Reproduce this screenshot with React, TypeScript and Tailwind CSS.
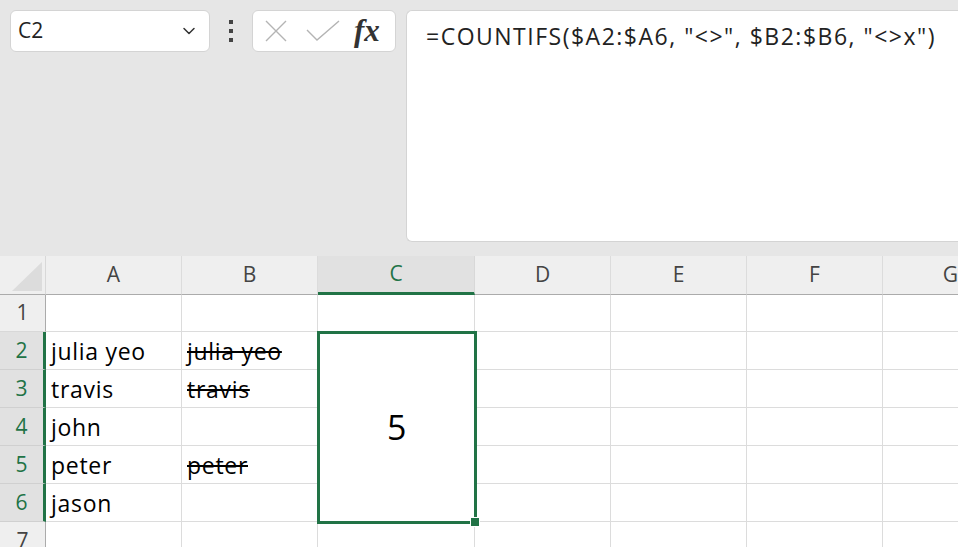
import { ChevronDown } from "lucide-react";

const cols = ["A", "B", "C", "D", "E", "F", "G"];

const rows: { a: string; b: string }[] = [
  { a: "", b: "" },
  { a: "julia yeo", b: "julia yeo" },
  { a: "travis", b: "travis" },
  { a: "john", b: "" },
  { a: "peter", b: "peter" },
  { a: "jason", b: "" },
  { a: "", b: "" },
];

const font = { fontFamily: "'Open Sans', 'Noto Sans', sans-serif" };

export default function App() {
  return (
    <div className="w-[958px] h-[547px] overflow-hidden bg-white" style={font}>
      {/* formula bar area */}
      <div className="h-[256px] bg-[#e6e6e6] flex items-start pt-[10px]">
        <div className="ml-[10px] w-[200px] h-[42px] bg-white rounded-md border border-[#d4d4d4] flex items-center justify-between pl-[7px] pr-[10px]">
          <span className="text-[21px] text-[#222]">C2</span>
          <ChevronDown className="w-5 h-5 text-[#333]" strokeWidth={1.8} />
        </div>
        <div className="w-[42px] h-[42px] flex flex-col items-center justify-center gap-[5px]">
          <div className="w-[4px] h-[4px] bg-[#444]" />
          <div className="w-[4px] h-[4px] bg-[#444]" />
          <div className="w-[4px] h-[4px] bg-[#444]" />
        </div>
        <div className="w-[144px] h-[42px] bg-white rounded-md border border-[#d4d4d4] flex items-center pl-[11px] gap-[18px]">
          <svg width="24" height="24" viewBox="0 0 24 24" className="text-[#b4b4b4]">
            <path d="M2 2 L22 22 M22 2 L2 22" stroke="currentColor" strokeWidth="1.4" fill="none" />
          </svg>
          <svg width="34" height="22" viewBox="0 0 34 22" className="text-[#b4b4b4]">
            <path d="M1 10 L11 20 L33 1" stroke="currentColor" strokeWidth="1.4" fill="none" />
          </svg>
          <span className="text-[31px] italic font-semibold text-[#333] leading-none -mt-[2px] -ml-[4px]" style={{ fontFamily: "'Liberation Serif', serif" }}>
            fx
          </span>
        </div>
        <div className="ml-[10px] flex-1 h-[232px] bg-white rounded-l-md border border-r-0 border-[#d4d4d4] pl-[19px] pt-[8px]">
          <span className="text-[23px] tracking-[1.5px] text-[#222] whitespace-nowrap">=COUNTIFS($A2:$A6, "&lt;&gt;", $B2:$B6, "&lt;&gt;x")</span>
        </div>
      </div>

      {/* grid */}
      <div className="grid grid-cols-[46px_136px_136px_157px_136px_136px_136px_136px] grid-rows-[39px_37px_38px_38px_38px_38px_38px_38px] text-[23px] tracking-[0.7px]">
        {/* header row */}
        <div className="bg-[#efefef] border-b border-[#ababab] border-r border-r-[#d8d8d8] relative">
          <div className="absolute right-[3px] bottom-[3px] w-0 h-0 border-l-[30px] border-l-transparent border-b-[29px] border-b-[#dcdcdc]" />
        </div>
        {cols.map((c) =>
          c === "C" ? (
            <div key={c} className="bg-[#e1e1e1] border-b-[3px] border-[#217346] border-r border-r-[#d8d8d8] flex items-center justify-center text-[#217346] text-[21px] tracking-normal">
              {c}
            </div>
          ) : (
            <div key={c} className="bg-[#efefef] border-b border-[#ababab] border-r border-r-[#dcdcdc] flex items-center justify-center text-[#444] text-[21px] tracking-normal">
              {c}
            </div>
          )
        )}

        {rows.map((r, i) => {
          const n = i + 1;
          const sel = n >= 2 && n <= 6;
          return (
            <>
              <div
                key={`h${n}`}
                className={
                  sel
                    ? "bg-[#e1e1e1] border-b border-[#d0d0d0] border-r-[3px] border-r-[#217346] flex items-center justify-center text-[#217346] text-[21px] tracking-normal"
                    : "bg-[#efefef] border-b border-[#d8d8d8] border-r border-r-[#ababab] flex items-center justify-center text-[#444] text-[21px] tracking-normal"
                }
              >
                {n}
              </div>
              <div key={`a${n}`} className="border-b border-r border-[#dcdcdc] flex items-end pl-[5px] pb-[1px] text-black whitespace-nowrap">
                {r.a}
              </div>
              <div key={`b${n}`} className="border-b border-r border-[#dcdcdc] flex items-end pl-[5px] pb-[1px] text-black whitespace-nowrap">
                <span className="line-through decoration-[2px]">{r.b}</span>
              </div>
              {n === 2 ? (
                <div key="c2" className="row-span-5 relative -ml-[1px] -mt-[1px] -mr-[2px] -mb-[2px] border-[3px] border-[#217346] flex items-center justify-center text-[34px] text-black">
                  5
                  <div className="absolute -right-[6px] -bottom-[6px] w-[10px] h-[10px] bg-[#217346] border border-white" />
                </div>
              ) : sel ? null : (
                <div key={`c${n}`} className="border-b border-r border-[#dcdcdc]" />
              )}
              {["D", "E", "F", "G"].map((c) => (
                <div key={`${c}${n}`} className="border-b border-r border-[#dcdcdc]" />
              ))}
            </>
          );
        })}
      </div>
    </div>
  );
}
